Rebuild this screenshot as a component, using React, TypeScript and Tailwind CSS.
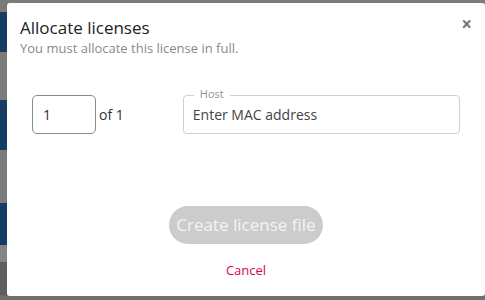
import React from "react";

export default function App() {
  return (
    <div
      className="relative w-[485px] h-[300px] overflow-hidden bg-[#7b7b7b]"
      style={{ fontFamily: '"Open Sans", "Noto Sans", sans-serif' }}
    >
      {/* dimmed background page strips */}
      <div className="absolute left-0 top-0 w-[8px] h-[300px] flex flex-col">
        <div className="h-[12px] bg-[#7b7b7b]" />
        <div className="h-[40px] bg-[#163c64]" />
        <div className="h-[48px] bg-[#7b7b7b]" />
        <div className="h-[50px] bg-[#163c64]" />
        <div className="h-[53px] bg-[#7b7b7b]" />
        <div className="h-[42px] bg-[#163c64]" />
        <div className="h-[17px] bg-[#858585]" />
        <div className="h-[33px] bg-[#5e5e5e]" />
        <div className="flex-1 bg-[#6a6a6a]" />
      </div>
      <div className="absolute left-0 bottom-0 w-[485px] h-[4px] bg-[#6f6f6f]" />

      {/* modal */}
      <div className="absolute left-[7px] top-[3px] w-[478px] h-[293px] bg-white rounded-[3px] flex flex-col">
        <div className="relative px-[13px] pt-[14px]">
          <div className="text-[17px] leading-[22px] font-medium text-[#222]">Allocate licenses</div>
          <div className="text-[13px] leading-[18px] text-[#8a8a8a]">You must allocate this license in full.</div>
          <div className="absolute right-[13px] top-[11px] text-[#777] text-[19px] font-bold leading-[20px]">×</div>
        </div>
        <div className="flex items-center mt-[38px] pl-[25px]">
          <div className="w-[64px] h-[39px] border border-[#8a8a8a] rounded-[5px] flex items-center pl-[10px] text-[14px] text-[#333]">
            1
          </div>
          <div className="ml-[3px] text-[14px] text-[#333]">of 1</div>
          <div className="relative ml-[59px] w-[277px] h-[39px] border border-[#d0d0d0] rounded-[4px] flex items-center pl-[9px] text-[14px] text-[#444]">
            <span className="absolute left-[10px] top-[-9px] bg-white px-[6px] text-[11px] leading-[14px] text-[#9a8f88]">Host</span>
            Enter MAC address
          </div>
        </div>
        <div className="flex justify-center mt-[72px]">
          <div className="w-[154px] h-[38px] rounded-full bg-[#cccccc] text-[#f4f4f4] text-[17px] flex items-center justify-center">
            Create license file
          </div>
        </div>
        <div className="flex justify-center mt-[17px] text-[13px] text-[#d4064f]">Cancel</div>
      </div>
    </div>
  );
}
